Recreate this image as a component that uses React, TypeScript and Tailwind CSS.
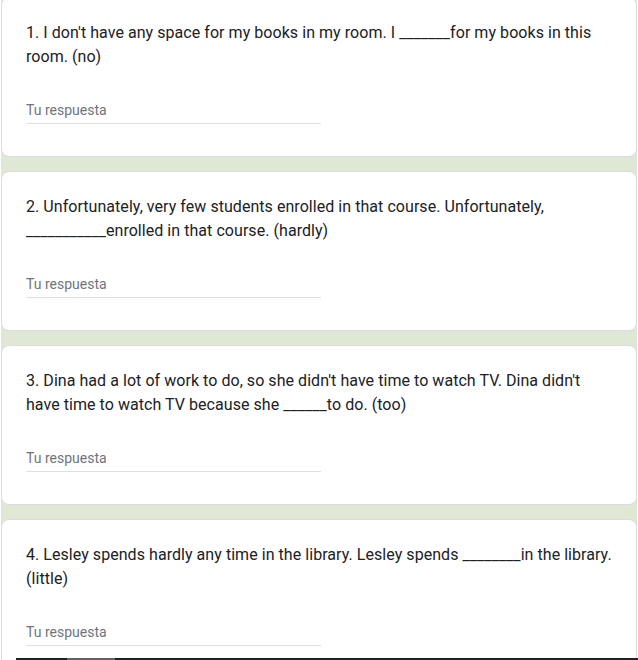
const questions = [
  {
    id: 1,
    text: "1. I don't have any space for my books in my room. I _______for my books in this room. (no)",
  },
  {
    id: 2,
    text: "2. Unfortunately, very few students enrolled in that course. Unfortunately, ___________enrolled in that course. (hardly)",
  },
  {
    id: 3,
    text: "3. Dina had a lot of work to do, so she didn't have time to watch TV. Dina didn't have time to watch TV because she ______to do. (too)",
  },
  {
    id: 4,
    text: "4. Lesley spends hardly any time in the library. Lesley spends ________in the library. (little)",
  },
];

const QuestionCard = ({ text }: { text: string }) => {
  return (
    <div className="h-[160px] rounded-lg border border-[#dadce0] bg-white px-6 pt-[23px]">
      <p className="text-[16px] leading-6 tracking-[0.05px] text-[#202124] font-['Roboto',sans-serif]">
        {text}
      </p>
      <div className="mt-[31px] w-[295px] border-b border-[#e0e0e0] pb-[3px]">
        <span className="block text-[14px] leading-5 text-[#70757a] font-['Roboto',sans-serif]">
          Tu respuesta
        </span>
      </div>
    </div>
  );
};

export default function App() {
  return (
    <div className="h-[660px] overflow-hidden bg-white">
      <div className="ml-[1px] mr-[1px] -mt-[3px] flex flex-col gap-[14px] bg-[#dee8d5]">
        {questions.map((q) => (
          <QuestionCard key={q.id} text={q.text} />
        ))}
      </div>

      <div className="fixed bottom-0 left-[16px] right-0 flex h-[2px] bg-[#202124]">
        <div className="ml-[51px] w-[48px] bg-[#5f6368]" />
      </div>
    </div>
  );
}
